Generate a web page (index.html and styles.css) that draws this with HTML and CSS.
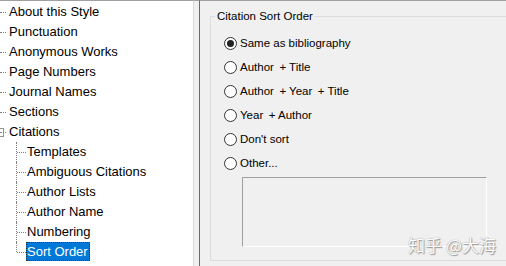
FILE: index.html
```html
<!DOCTYPE html>
<html lang="en">
<head>
  <meta charset="UTF-8">
  <title>Citation Sort Order</title>
  <link rel="stylesheet" href="styles.css">
</head>
<body>
  <div class="tree">
    <ul class="top">
      <li class="item">About this Style</li>
      <li class="item">Punctuation</li>
      <li class="item">Anonymous Works</li>
      <li class="item">Page Numbers</li>
      <li class="item">Journal Names</li>
      <li class="item">Sections</li>
      <li class="item open">Citations</li>
    </ul>
    <ul class="children">
      <li class="child">Templates</li>
      <li class="child">Ambiguous Citations</li>
      <li class="child">Author Lists</li>
      <li class="child">Author Name</li>
      <li class="child">Numbering</li>
      <li class="child last"><span class="selected">Sort Order</span></li>
    </ul>
  </div>

  <div class="splitter"></div>

  <div class="pane">
    <fieldset class="group">
      <legend>Citation Sort Order</legend>
      <label class="radio checked"><span class="dot"></span>Same as bibliography</label>
      <label class="radio"><span class="dot"></span>Author&thinsp; + Title</label>
      <label class="radio"><span class="dot"></span>Author&thinsp; + Year&thinsp; + Title</label>
      <label class="radio"><span class="dot"></span>Year&thinsp; + Author</label>
      <label class="radio"><span class="dot"></span>Don't sort</label>
      <label class="radio"><span class="dot"></span>Other...</label>
      <div class="other-box"></div>
    </fieldset>
  </div>

  <div class="watermark">知乎 @大海</div>
</body>
</html>
```

FILE: styles.css
```css
body {
  margin: 0;
  width: 506px;
  height: 266px;
  overflow: hidden;
  display: flex;
  background-color: #f0f0f0;
  font-family: "Liberation Sans", Arial, sans-serif;
  color: #000;
  position: relative;
}

.tree {
  width: 193px;
  background-color: #fff;
  border-right: 1px solid #dadada;
  border-top: 1px solid #a0a0a0;
  padding-top: 1px;
  font-size: 13px;
  flex-shrink: 0;
}

.tree ul {
  list-style: none;
  margin: 0;
  padding: 0;
}

.item {
  height: 20px;
  line-height: 20px;
  padding-left: 9px;
  position: relative;
}

.item::before {
  content: "";
  position: absolute;
  left: 0;
  top: 10px;
  width: 6px;
  border-top: 1px dotted #808080;
}

.item.open::after {
  content: "";
  position: absolute;
  left: -5px;
  top: 6px;
  width: 7px;
  height: 7px;
  border: 1px solid #909090;
}

.children {
  margin-left: 16px !important;
}

.child {
  height: 20px;
  line-height: 20px;
  padding-left: 11px;
  position: relative;
}

.child::before {
  content: "";
  position: absolute;
  left: 0;
  top: 0;
  height: 20px;
  border-left: 1px dotted #808080;
}

.child.last::before {
  height: 10px;
}

.child::after {
  content: "";
  position: absolute;
  left: 1px;
  top: 10px;
  width: 9px;
  border-top: 1px dotted #808080;
}

.selected {
  display: inline-block;
  height: 19px;
  line-height: 19px;
  margin-left: -1px;
  background-color: #0078d7;
  color: #fff;
  outline: 1px dotted #333;
  outline-offset: -1px;
  padding: 0 2px 0 1px;
}

.splitter {
  width: 5px;
  flex-shrink: 0;
  border-right: 1px solid #696969;
  border-top: 1px solid #a0a0a0;
}

.pane {
  flex: 1;
  border-top: 1px solid #a0a0a0;
  padding: 9px 0 0 10px;
  font-size: 11.5px;
}

.group {
  margin: 0 -20px 0 0;
  border: 1px solid #dcdcdc;
  padding: 9px 0 13px 13px;
  height: 251px;
  box-sizing: border-box;
}

.group legend {
  padding: 0 2px;
  margin-left: -9px;
  font-size: 11.5px;
}

.radio {
  display: flex;
  align-items: center;
  height: 24px;
}

.dot {
  width: 11px;
  height: 11px;
  border: 1px solid #333;
  border-radius: 50%;
  background-color: #fff;
  margin-right: 3px;
  position: relative;
}

.checked .dot::after {
  content: "";
  position: absolute;
  left: 2px;
  top: 2px;
  width: 7px;
  height: 7px;
  border-radius: 50%;
  background-color: #222;
}

.other-box {
  margin: 2px 0 0 18px;
  width: 243px;
  height: 68px;
  border-top: 1px solid #a0a0a0;
  border-left: 1px solid #a0a0a0;
  border-right: 1px solid #fff;
  border-bottom: 1px solid #fff;
}

.watermark {
  position: absolute;
  right: 10px;
  bottom: 9px;
  font-family: "Noto Sans CJK SC", sans-serif;
  font-size: 17px;
  color: #fff;
  text-shadow: 0 0 1px #888, 1px 1px 1px #999;
}
```
